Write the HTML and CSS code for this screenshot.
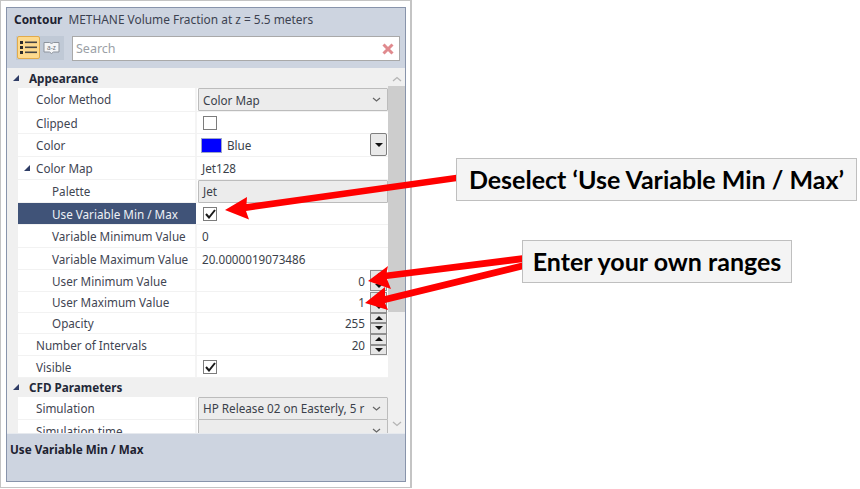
FILE: index.html
```html
<!DOCTYPE html>
<html lang="en">
<head>
<meta charset="utf-8">
<title>Contour properties</title>
<link rel="stylesheet" href="styles.css">
</head>
<body>
<div class="shot">
  <div class="frame">
    <div class="panel">
      <header class="head">
        <div class="title"><b>Contour</b><span>METHANE Volume Fraction at z = 5.5 meters</span></div>
        <div class="tools">
          <div class="modes">
            <button class="mode active" aria-label="Categorized">
              <svg width="17" height="15" viewBox="0 0 17 15"><g fill="#2b2b2b"><rect x="0" y="1" width="3" height="3"/><rect x="0" y="6" width="3" height="3"/><rect x="0" y="11" width="3" height="3"/></g><g fill="#444"><rect x="5" y="1.500" width="12" height="1.600"/><rect x="5" y="6.500" width="12" height="1.600"/><rect x="5" y="11.500" width="12" height="1.600"/></g></svg>
            </button>
            <button class="mode" aria-label="Alphabetical">
              <svg width="17" height="15" viewBox="0 0 17 15"><path d="M1 2.500h5.500L8.500 3.500l2-1H16V12h-5.500l-2 1.500-2-1.500H1z" fill="#f4f5f7" stroke="#8d939c"/><text class="az" x="8.500" y="9.500" text-anchor="middle">a-z</text></svg>
            </button>
          </div>
          <div class="search">
            <span>Search</span>
            <svg width="12" height="12" viewBox="0 0 12 12"><path d="M1.500 1.500l9 9M10.500 1.500l-9 9" stroke="#e08a8e" stroke-width="3"/></svg>
          </div>
        </div>
      </header>
      <div class="body">
        <div class="grid">
          <div class="cat"><i class="tri"></i>Appearance</div>
          <div class="row r24"><div class="name l1 up1">Color Method</div><div class="val"><div class="combo">Color Map<svg class="chev" width="9" height="5" viewBox="0 0 9 5"><path d="M1 1l3.500 3L8 1" fill="none" stroke="#666" stroke-width="1.2"/></svg></div></div></div>
          <div class="row"><div class="name l1">Clipped</div><div class="val"><span class="check"></span></div></div>
          <div class="row r23"><div class="name l1">Color</div><div class="val"><span class="swatch"></span><span class="swlabel">Blue</span><span class="drop"><i></i></span></div></div>
          <div class="row r23"><div class="name l1"><i class="tri sub"></i>Color Map</div><div class="val">Jet128</div></div>
          <div class="row r23"><div class="name l2">Palette</div><div class="val"><div class="combo">Jet</div></div></div>
          <div class="row"><div class="name l2 sel">Use Variable Min / Max</div><div class="val"><span class="check"><svg width="11" height="10" viewBox="0 0 11 10"><path d="M1 5l3 3.500L10 1" fill="none" stroke="#1a1a1a" stroke-width="2"/></svg></span></div></div>
          <div class="row r23"><div class="name l2">Variable Minimum Value</div><div class="val">0</div></div>
          <div class="row"><div class="name l2">Variable Maximum Value</div><div class="val">20.0000019073486</div></div>
          <div class="row"><div class="name l2">User Minimum Value</div><div class="val num"><span>0</span><span class="spin"><b><i class="up"></i></b><b><i class="dn"></i></b></span></div></div>
          <div class="row r21"><div class="name l2">User Maximum Value</div><div class="val num"><span>1</span><span class="spin"><b><i class="up"></i></b><b><i class="dn"></i></b></span></div></div>
          <div class="row r21"><div class="name l2">Opacity</div><div class="val num"><span>255</span><span class="spin"><b><i class="up"></i></b><b><i class="dn"></i></b></span></div></div>
          <div class="row"><div class="name l1">Number of Intervals</div><div class="val num"><span>20</span><span class="spin"><b><i class="up"></i></b><b><i class="dn"></i></b></span></div></div>
          <div class="row"><div class="name l1">Visible</div><div class="val"><span class="check"><svg width="11" height="10" viewBox="0 0 11 10"><path d="M1 5l3 3.500L10 1" fill="none" stroke="#1a1a1a" stroke-width="2"/></svg></span></div></div>
          <div class="cat c19"><i class="tri"></i>CFD Parameters</div>
          <div class="row r23"><div class="name l1">Simulation</div><div class="val"><div class="combo">HP Release 02 on Easterly, 5 r<svg class="chev" width="9" height="5" viewBox="0 0 9 5"><path d="M1 1l3.500 3L8 1" fill="none" stroke="#666" stroke-width="1.2"/></svg></div></div></div>
          <div class="row"><div class="name l1">Simulation time</div><div class="val"><div class="combo"><svg class="chev" width="9" height="5" viewBox="0 0 9 5"><path d="M1 1l3.500 3L8 1" fill="none" stroke="#666" stroke-width="1.2"/></svg></div></div></div>
        </div>
        <div class="scroll">
          <svg class="sarrow" width="10" height="6" viewBox="0 0 10 6"><path d="M1 5l4-3.500L9 5" fill="none" stroke="#b5b5b5" stroke-width="1.3"/></svg>
          <div class="thumb"></div>
          <svg class="sarrow end" width="10" height="6" viewBox="0 0 10 6"><path d="M1 1l4 3.500L9 1" fill="none" stroke="#b5b5b5" stroke-width="1.3"/></svg>
        </div>
      </div>
      <footer class="desc">Use Variable Min / Max</footer>
    </div>
  </div>
  <svg class="arrows" width="860" height="489" viewBox="0 0 860 489">
    <g fill="#ff0000">
      <path d="M458 174.500L458 181L246 211L249 219.500L225 210L247 197L246.500 204z"/>
      <path d="M524 255L524 262L387 279L391 289L368 281L388 266L386.500 272.500z"/>
      <path d="M524 262L524 269L385 303L388 310L365 303L385 287L385 296z"/>
    </g>
  </svg>
  <div class="callout c1">Deselect ‘Use Variable Min / Max’</div>
  <div class="callout c2">Enter your own ranges</div>
</div>
</body>
</html>
```
FILE: styles.css
```css
* { box-sizing: border-box; }
html, body { margin: 0; padding: 0; background: #fff; }
body { width: 860px; height: 489px; overflow: hidden; font-family: "Noto Sans", "Open Sans", sans-serif; font-size: 11.700px; color: #3a3f4a; }
.shot { position: relative; width: 860px; height: 489px; }
.frame { width: 412px; height: 488px; border: 1px solid #c4c4c4; border-right-width: 2px; padding: 6px 4px 5px 5px; }
.panel { height: 475px; border: 1px solid #8894ab; display: flex; flex-direction: column; background: #f0f0f0; }

.head { height: 60px; flex: none; background: #cdd4e0; padding: 1px 5px 0 7px; }
.title { height: 20px; display: flex; align-items: center; gap: 6px; font-size: 11.900px; color: #3c4250; white-space: nowrap; }
.title b { color: #1d2230; font-weight: 700; }
.tools { display: flex; gap: 8px; margin-top: 7px; }
.modes { display: flex; width: 48px; height: 24px; margin-left: 2px; padding-left: 1px; background: #c0c9d6; }
.mode { width: 23px; height: 23px; padding: 0; border: 1px solid transparent; background: transparent; display: flex; align-items: center; justify-content: center; }
.mode.active { background: #fdda8e; border: 1px solid #e2ab4b; border-radius: 2px; }
.az { font-family: "Noto Sans", sans-serif; font-size: 6.500px; fill: #6d727a; }
.search { width: 328px; height: 25px; background: #fff; border: 1px solid #a9a9a9; display: flex; align-items: center; justify-content: space-between; padding: 0 5px 0 3px; color: #9b9fa6; font-size: 12.500px; }

.body { flex: none; height: 365px; display: flex; background: #f0f0f0; }
.grid { width: 381px; height: 365px; overflow: hidden; }
.cat { height: 20px; display: flex; align-items: center; font-weight: 700; color: #232838; padding-left: 6px; gap: 10px; }
.c19 { height: 19px; padding-bottom: 1px; }
.tri { display: block; width: 0; height: 0; border-style: solid; border-width: 0 0 6px 6px; border-color: transparent transparent #2f3d66 transparent; }
.tri.sub { margin-left: -12px; margin-right: 6px; }
.row { flex: none; height: 22px; margin-left: 11px; display: flex; background: #fff; border-bottom: 1px solid #f2f2f2; }
.r24 { height: 24px; }
.r23 { height: 23px; }
.r21 { height: 21px; }
.name { width: 179px; flex: none; display: flex; align-items: center; white-space: nowrap; color: #3f4552; border-right: 2px solid #f4f4f4; }
.up1 { padding-bottom: 2px; }
.l1 { padding-left: 18px; }
.l2 { padding-left: 34px; }
.sel { background: #405378; color: #eef1f6; border-right: 0; width: 178px; margin-right: 1px; }
.val { flex: 1; min-width: 0; display: flex; align-items: center; position: relative; padding-left: 5px; }
.combo { position: relative; flex: 1; height: 23px; margin-left: -4px; padding-left: 4px; display: flex; align-items: center; background: #ececec; border: 1px solid #bcbcbc; border-radius: 1px; white-space: nowrap; }
.chev { position: absolute; right: 6px; top: 8px; }
.check { width: 14px; height: 14px; margin-left: 1px; border: 1px solid #7c7c7c; background: #fff; display: inline-flex; align-items: center; justify-content: center; }
.swatch { width: 19px; height: 13px; background: #0000ff; outline: 1px solid #9da6c8; }
.swlabel { margin-left: 6px; }
.drop { position: absolute; right: 1px; top: -1px; width: 17px; height: 23px; background: #e9e9e9; border: 1px solid #7f7f7f; border-radius: 2px; display: flex; align-items: center; justify-content: center; }
.drop i { border-style: solid; border-width: 4px 4px 0; border-color: #111 transparent transparent; }
.num { justify-content: flex-end; padding-right: 1px; gap: 5px; }
.spin { display: flex; flex-direction: column; width: 17px; height: 21px; }
.spin b { flex: 1; background: #e6e6e6; border: 1px solid #8f8f8f; display: flex; align-items: center; justify-content: center; }
.spin i { border-style: solid; }
.spin .up { border-width: 0 4px 4px; border-color: transparent transparent #111; }
.spin .dn { border-width: 4px 4px 0; border-color: #111 transparent transparent; }

.scroll { width: 17px; height: 365px; display: flex; flex-direction: column; align-items: center; padding-top: 8px; }
.thumb { width: 17px; height: 226px; margin-top: 4px; background: #cdcdcd; flex: none; }
.sarrow { flex: none; }
.sarrow.end { margin-top: auto; margin-bottom: 6px; }

.desc { flex: 1; background: #cdd4e0; border-top: 1px solid #e6e9ee; padding: 7px 0 0 3px; font-weight: 700; color: #1d2230; }

.arrows { position: absolute; left: 0; top: 0; pointer-events: none; }
.callout { position: absolute; height: 43px; padding-bottom: 2px; background: #f4f4f4; border: 1px solid #bfbfbf; display: flex; align-items: center; justify-content: center; font-family: Lato, "Liberation Sans", sans-serif; font-weight: 700; color: #000; white-space: nowrap; font-size: 25px; }
.c1 { left: 456px; top: 158px; width: 401px; }
.c2 { left: 522px; top: 240px; width: 270px; }
```
